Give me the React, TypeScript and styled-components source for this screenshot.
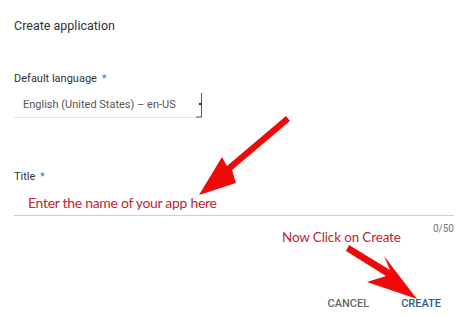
import styled, { createGlobalStyle } from 'styled-components';

const GlobalStyle = createGlobalStyle`
  html, body {
    margin: 0;
    padding: 0;
    background: #ffffff;
  }
  body {
    font-family: Roboto, "Liberation Sans", Arial, sans-serif;
  }
`;

export default function App() {
  return (
    <>
      <GlobalStyle />
      <Page>
        <Heading>Create application</Heading>

        <Label>
          Default language <Required>*</Required>
        </Label>
        <SelectBox>
          <SelectValue>English (United States) – en-US</SelectValue>
          <SelectHandle width="10" height="26" viewBox="0 0 10 26">
            <path d="M6.5 1 V25 H1" fill="none" stroke="#555" strokeWidth="1" />
            <rect x="4" y="11" width="2" height="2" fill="#222" />
          </SelectHandle>
        </SelectBox>

        <Label $top={48}>
          Title <Required>*</Required>
        </Label>
        <TextField>
          <Hint>Enter the name of your app here</Hint>
        </TextField>
        <Counter>0/50</Counter>

        <Actions>
          <ActionButton>CANCEL</ActionButton>
          <ActionButton $primary>CREATE</ActionButton>
        </Actions>

        <Note>Now Click on Create</Note>

        <Arrows width="474" height="316" viewBox="0 0 474 316">
          <polygon
            fill="#ee0a0a"
            points="286,116 290,121 232,170 236,183 199,195 222,157 227,166"
          />
          <polygon
            fill="#ee0a0a"
            points="349,245 346,251 386,276 367,282 417,299 384,256 390,270"
          />
        </Arrows>
      </Page>
    </>
  );
}

const Page = styled.div`
  position: relative;
  width: 474px;
  height: 316px;
  box-sizing: border-box;
  padding: 0 20px 0 14px;
  display: flex;
  flex-direction: column;
  overflow: hidden;
`;

const Heading = styled.div`
  height: 50px;
  display: flex;
  align-items: center;
  font-size: 12.5px;
  color: #333;
`;

const Label = styled.div<{ $top?: number }>`
  margin-top: ${(p) => p.$top ?? 18}px;
  height: 20px;
  display: flex;
  align-items: center;
  font-size: 11px;
  color: #333;
  white-space: pre;
`;

const Required = styled.span`
  color: #3f7fb0;
  margin-left: 2px;
`;

const SelectBox = styled.div`
  position: relative;
  width: 188px;
  height: 30px;
  box-sizing: border-box;
  padding: 4px 0 0 9px;
  display: flex;
  align-items: center;
  border-bottom: 1px solid #e3e3e3;
`;

const SelectValue = styled.span`
  font-size: 11px;
  color: #555;
  flex: 1;
`;

const SelectHandle = styled.svg`
  position: absolute;
  right: -3px;
  top: 4px;
`;

const TextField = styled.div`
  height: 30px;
  box-sizing: border-box;
  padding: 4px 0 0 14px;
  display: flex;
  align-items: center;
  border-bottom: 1px solid #cfcfcf;
`;

const Hint = styled.span`
  font-family: Lato, "Open Sans", sans-serif;
  font-size: 14px;
  letter-spacing: -0.3px;
  color: #c2262e;
`;

const Counter = styled.div`
  height: 24px;
  display: flex;
  align-items: center;
  justify-content: flex-end;
  font-size: 10px;
  color: #777;
`;

const Actions = styled.div`
  margin-top: auto;
  margin-bottom: 0;
  height: 26px;
  margin-right: 5px;
  display: flex;
  justify-content: flex-end;
  align-items: center;
  gap: 16px;
`;

const ActionButton = styled.button<{ $primary?: boolean }>`
  border: none;
  background: transparent;
  padding: 0 8px;
  font-family: Roboto, "Liberation Sans", sans-serif;
  font-size: 11px;
  font-weight: 500;
  color: ${(p) => (p.$primary ? '#2c5d8a' : '#666')};
`;

const Note = styled.div`
  position: absolute;
  left: 282px;
  top: 229px;
  font-family: Lato, "Open Sans", sans-serif;
  font-size: 13.5px;
  letter-spacing: -0.15px;
  color: #c2262e;
`;

const Arrows = styled.svg`
  position: absolute;
  left: 0;
  top: 0;
  pointer-events: none;
`;
